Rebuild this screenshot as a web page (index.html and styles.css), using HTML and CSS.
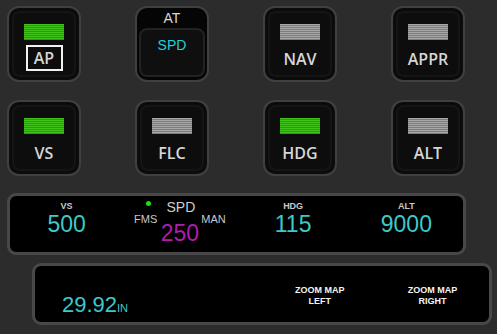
FILE: index.html
```html
<!DOCTYPE html>
<html lang="en">
<head>
    <meta charset="UTF-8">
    <title>Autopilot</title>
    <link rel="stylesheet" href="styles.css">
</head>
<body>
<div class="panel">
    <div class="keys">
        <div class="key">
            <div class="face">
                <div class="bar on"></div>
                <div class="label boxed">AP</div>
            </div>
        </div>
        <div class="key at">
            <div class="at-title">AT</div>
            <div class="at-face">SPD</div>
        </div>
        <div class="key">
            <div class="face">
                <div class="bar"></div>
                <div class="label">NAV</div>
            </div>
        </div>
        <div class="key">
            <div class="face">
                <div class="bar"></div>
                <div class="label">APPR</div>
            </div>
        </div>
        <div class="key">
            <div class="face">
                <div class="bar on"></div>
                <div class="label">VS</div>
            </div>
        </div>
        <div class="key">
            <div class="face">
                <div class="bar"></div>
                <div class="label">FLC</div>
            </div>
        </div>
        <div class="key">
            <div class="face">
                <div class="bar on"></div>
                <div class="label">HDG</div>
            </div>
        </div>
        <div class="key">
            <div class="face">
                <div class="bar"></div>
                <div class="label">ALT</div>
            </div>
        </div>
    </div>

    <div class="screen main">
        <div class="cell">
            <div class="cap">VS</div>
            <div class="num">500</div>
        </div>
        <div class="cell spd">
            <div class="spd-top">
                <span class="dot"></span>
                <span class="spd-title">SPD</span>
            </div>
            <div class="spd-mid">
                <span class="small">FMS</span>
                <span class="small">MAN</span>
            </div>
            <div class="num magenta">250</div>
        </div>
        <div class="cell">
            <div class="cap">HDG</div>
            <div class="num">115</div>
        </div>
        <div class="cell">
            <div class="cap">ALT</div>
            <div class="num">9000</div>
        </div>
    </div>

    <div class="screen lower">
        <div class="baro">29.92<span class="unit">IN</span></div>
        <div class="zoom left">ZOOM MAP<br>LEFT</div>
        <div class="zoom right">ZOOM MAP<br>RIGHT</div>
    </div>
</div>
</body>
</html>
```

FILE: styles.css
```css
* {
    margin: 0;
    padding: 0;
    box-sizing: border-box;
}

body {
    width: 497px;
    height: 334px;
    overflow: hidden;
    background: #2c2c2c;
    font-family: "Liberation Sans", Arial, sans-serif;
}

.panel {
    padding: 6px 0 0 7px;
}

/* buttons */
.keys {
    display: grid;
    grid-template-columns: repeat(4, 74px);
    grid-auto-rows: 76px;
    column-gap: 54px;
    row-gap: 18px;
}

.key {
    border: 2px solid #404040;
    border-radius: 12px;
    background: #0b0b0b;
    padding: 3px;
}

.face {
    height: 100%;
    border: 2px solid #151515;
    border-radius: 8px;
    background: #0d0d0d;
    display: flex;
    flex-direction: column;
    align-items: center;
    padding-top: 11px;
}

.bar {
    width: 40px;
    height: 16px;
    background: repeating-linear-gradient(#a8a8a8 0, #a8a8a8 1px, #7c7c7c 1px, #7c7c7c 2px);
}

.bar.on {
    background: repeating-linear-gradient(#42c21c 0, #42c21c 1px, #2e9a12 1px, #2e9a12 2px);
}

.label {
    margin-top: 9px;
    font-family: "Open Sans", "Noto Sans", sans-serif;
    font-size: 16px;
    font-weight: 600;
    line-height: 20px;
    color: #d6d6d6;
}

.label.boxed {
    margin-top: 5px;
    width: 37px;
    height: 26px;
    border: 2px solid #f2f2f2;
    text-align: center;
    line-height: 22px;
}

.key.at {
    padding: 0 2px 3px;
    display: flex;
    flex-direction: column;
    background: #050505;
}

.at-title {
    text-align: center;
    font-size: 14px;
    line-height: 20px;
    color: #d8d8d8;
}

.at-face {
    flex: 1;
    border: 2px solid #222;
    border-radius: 8px;
    background: #0f0f0f;
    text-align: center;
    color: #22d0d8;
    font-size: 14px;
    padding-top: 7px;
}

/* displays */
.screen {
    border: 3px solid #484848;
    border-radius: 9px;
    background: #000;
    height: 62px;
}

.main {
    width: 459px;
    margin-top: 17px;
    display: grid;
    grid-template-columns: repeat(4, 1fr);
}

.cell {
    display: flex;
    flex-direction: column;
    align-items: center;
    padding-top: 5px;
}

.cap {
    font-size: 9px;
    font-weight: bold;
    color: #c8c8c8;
    line-height: 10px;
}

.num {
    font-size: 23px;
    line-height: 26px;
    color: #3cc9c9;
}

.num.magenta {
    color: #b01cb0;
    margin-top: -5px;
}

.spd {
    padding-top: 4px;
}

.spd-top {
    display: flex;
    align-items: flex-start;
    gap: 15px;
    margin-left: -18px;
}

.dot {
    width: 5px;
    height: 5px;
    margin-top: 1px;
    border-radius: 50%;
    background: #19e019;
}

.spd-title {
    font-size: 14px;
    line-height: 14px;
    color: #cfcfcf;
}

.spd-mid {
    display: flex;
    gap: 44px;
    margin-top: -1px;
}

.small {
    font-size: 11px;
    line-height: 12px;
    color: #c8c8c8;
}

.lower {
    width: 460px;
    margin: 8px 0 0 25px;
    display: flex;
    align-items: flex-start;
}

.baro {
    width: 234px;
    padding: 26px 0 0 27px;
    font-size: 22px;
    line-height: 25px;
    color: #3cc9c9;
}

.unit {
    font-size: 11px;
}

.zoom {
    width: 116px;
    padding-top: 19px;
    text-align: center;
    font-size: 9px;
    font-weight: bold;
    line-height: 11px;
    color: #f4f4f4;
}
```
